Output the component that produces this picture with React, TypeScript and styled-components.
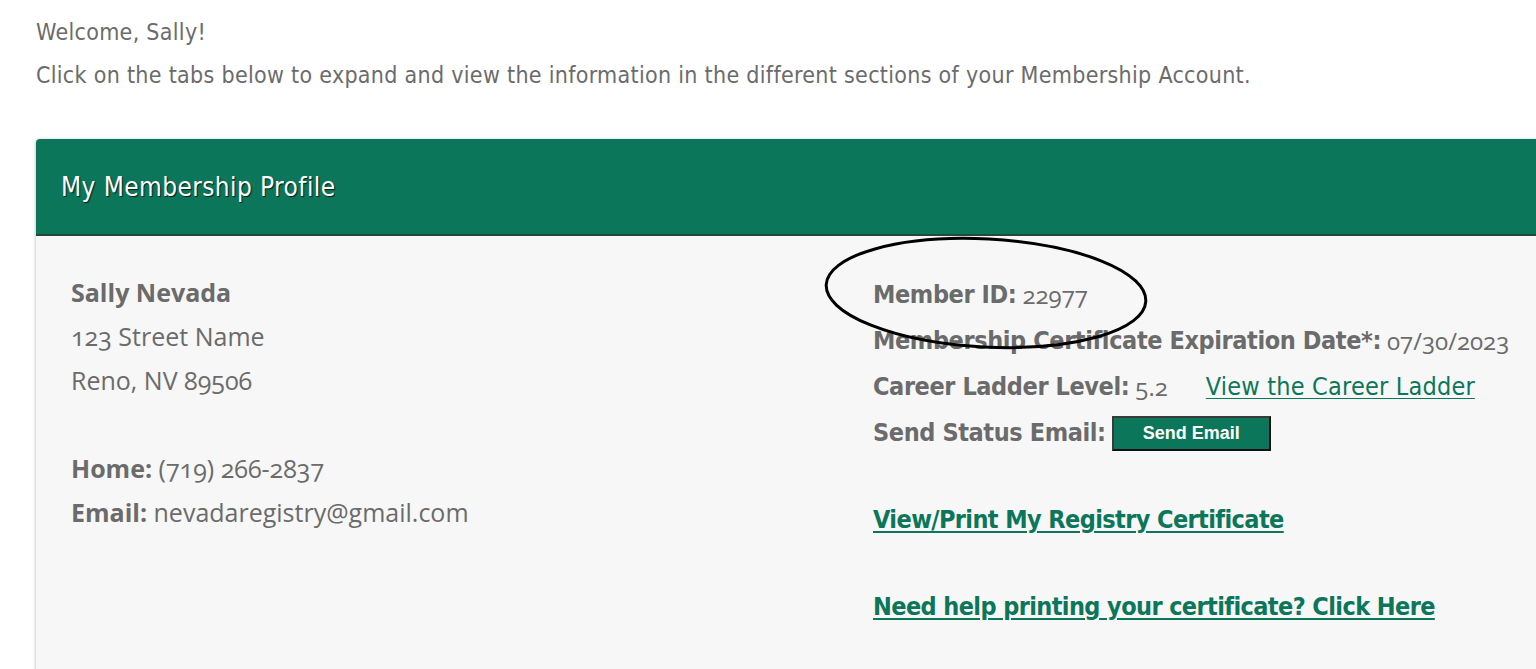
import styled, { createGlobalStyle } from 'styled-components'

const GlobalStyle = createGlobalStyle`
  html, body {
    margin: 0;
    padding: 0;
    background: #ffffff;
    overflow: hidden;
  }
`

const Page = styled.div`
  position: relative;
  width: 1536px;
  height: 669px;
  overflow: hidden;
  padding: 16px 0 0 36px;
  box-sizing: border-box;
  font-family: "DejaVu Sans Condensed", "DejaVu Sans", Roboto, sans-serif;
  font-stretch: condensed;
  color: #6b6b6b;
`

const Intro = styled.p`
  margin: 0;
  font-size: 23px;
  letter-spacing: 0.3px;
  line-height: 32px;
  margin-bottom: 11px;
`

const Card = styled.section`
  width: 1540px;
  margin-top: 48px;
  box-shadow: -1px 0 3px rgba(0, 0, 0, 0.18);
  border-radius: 4px 0 0 0;
  overflow: hidden;
`

const CardHeader = styled.header`
  height: 95px;
  background: #0b7659;
  border-bottom: 2px solid #24473b;
  display: flex;
  align-items: center;
  padding-left: 25px;
  font-size: 26px;
  letter-spacing: 0.4px;
  color: #ffffff;
  text-shadow: 1px 1px 1px rgba(0, 0, 0, 0.75);
`

const CardBody = styled.div`
  background: #f7f7f7;
  height: 440px;
  display: grid;
  grid-template-columns: 802px 1fr;
  padding: 34px 0 0 35px;
`

const Column = styled.div<{ $shift?: number }>`
  display: flex;
  flex-direction: column;
  margin-top: ${p => p.$shift ?? 0}px;
`

const AddrLine = styled.div<{ $gap?: number }>`
  font-family: "Open Sans", Lato, sans-serif;
  font-stretch: normal;
  font-size: 25px;
  line-height: 44px;
  font-variant-numeric: oldstyle-nums;
  margin-top: ${p => p.$gap ?? 0}px;
`

const AddrLabel = styled.b`
  font-weight: 700;
`

const InfoLine = styled.div<{ $gap?: number }>`
  font-size: 25px;
  line-height: 46px;
  height: 46px;
  display: flex;
  align-items: center;
  margin-top: ${p => p.$gap ?? 0}px;
`

const Label = styled.b`
  font-weight: 700;
  margin-right: 6px;
  letter-spacing: -0.4px;
`

const Num = styled.span`
  font-family: "Open Sans", Georgia, serif;
  font-stretch: normal;
  font-variant-numeric: oldstyle-nums;
  font-size: 24px;
`

const TextLink = styled.a<{ $bold?: boolean }>`
  color: #0b7659;
  text-decoration: underline;
  text-decoration-thickness: 2px;
  text-underline-offset: 3px;
  font-weight: ${p => (p.$bold ? 700 : 400)};
  letter-spacing: ${p => (p.$bold ? '-0.6px' : '0.2px')};
`

const LadderLink = styled(TextLink)`
  margin-left: 38px;
  text-decoration-thickness: 1px;
`

const SendButton = styled.button`
  width: 159px;
  height: 35px;
  background: #0b7659;
  color: #ffffff;
  border: 2px solid #111111;
  border-top-color: #3a3a3a;
  border-left-color: #3a3a3a;
  font-family: "Liberation Sans", Arial, sans-serif;
  font-weight: 700;
  font-size: 18px;
  padding: 0;
`

const Annotation = styled.svg`
  position: absolute;
  left: 822px;
  top: 234px;
  overflow: visible;
`

export default function App() {
  return (
    <>
      <GlobalStyle />
      <Page>
        <Intro>Welcome, Sally!</Intro>
        <Intro>
          Click on the tabs below to expand and view the information in the different sections of your
          Membership Account.
        </Intro>
        <Card>
          <CardHeader>My Membership Profile</CardHeader>
          <CardBody>
            <Column>
              <AddrLine>
                <AddrLabel>Sally Nevada</AddrLabel>
              </AddrLine>
              <AddrLine>123 Street Name</AddrLine>
              <AddrLine>Reno, NV 89506</AddrLine>
              <AddrLine $gap={44}>
                <AddrLabel>Home:</AddrLabel> (719) 266-2837
              </AddrLine>
              <AddrLine>
                <AddrLabel>Email:</AddrLabel> nevadaregistry@gmail.com
              </AddrLine>
            </Column>
            <Column $shift={2}>
              <InfoLine>
                <Label>Member ID:</Label>
                <Num>22977</Num>
              </InfoLine>
              <InfoLine>
                <Label>Membership Certificate Expiration Date*:</Label>
                <Num>07/30/2023</Num>
              </InfoLine>
              <InfoLine>
                <Label>Career Ladder Level:</Label>
                <Num>5.2</Num>
                <LadderLink href="#">View the Career Ladder</LadderLink>
              </InfoLine>
              <InfoLine>
                <Label>Send Status Email:</Label>
                <SendButton>Send Email</SendButton>
              </InfoLine>
              <InfoLine $gap={41}>
                <TextLink href="#" $bold>
                  View/Print My Registry Certificate
                </TextLink>
              </InfoLine>
              <InfoLine $gap={41}>
                <TextLink href="#" $bold>
                  Need help printing your certificate? Click Here
                </TextLink>
              </InfoLine>
            </Column>
          </CardBody>
        </Card>
        <Annotation width="330" height="118" viewBox="0 0 330 118">
          <ellipse
            cx="164"
            cy="59"
            rx="160"
            ry="54"
            fill="none"
            stroke="#000000"
            strokeWidth="3"
            transform="rotate(3 164 59)"
          />
        </Annotation>
      </Page>
    </>
  )
}
